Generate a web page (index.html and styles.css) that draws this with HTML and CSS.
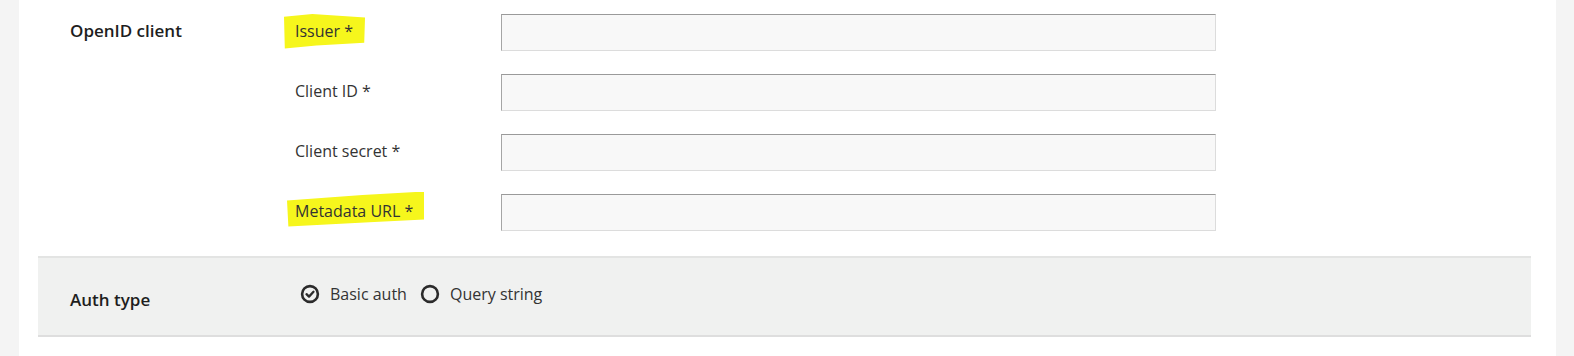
FILE: index.html
```html
<!DOCTYPE html>
<html lang="en">
<head>
    <meta charset="UTF-8">
    <title>OpenID client settings</title>
    <link rel="stylesheet" href="styles.css">
</head>
<body>
    <div class="panel">
        <div class="section">
            <div class="group-label">OpenID client</div>
            <div class="fields">
                <div class="field">
                    <label class="field-label"><span class="mark mark-issuer">Issuer *</span></label>
                    <input type="text" class="text-input">
                </div>
                <div class="field">
                    <label class="field-label">Client ID *</label>
                    <input type="text" class="text-input">
                </div>
                <div class="field">
                    <label class="field-label">Client secret *</label>
                    <input type="text" class="text-input">
                </div>
                <div class="field">
                    <label class="field-label"><span class="mark mark-metadata">Metadata URL *</span></label>
                    <input type="text" class="text-input">
                </div>
            </div>
        </div>

        <div class="band">
            <div class="group-label">Auth type</div>
            <div class="radios">
                <label class="radio">
                    <svg class="radio-icon" viewBox="0 0 20 20" width="20" height="20">
                        <circle cx="10" cy="10" r="7.9" fill="none" stroke="#2b2b2b" stroke-width="2.6"/>
                        <path d="M6.5 10.2 L9 12.6 L13.5 7.8" fill="none" stroke="#2b2b2b" stroke-width="2.3" stroke-linecap="round" stroke-linejoin="round"/>
                    </svg>
                    Basic auth
                </label>
                <label class="radio">
                    <svg class="radio-icon" viewBox="0 0 20 20" width="20" height="20">
                        <circle cx="10" cy="10" r="7.9" fill="none" stroke="#2b2b2b" stroke-width="2.6"/>
                    </svg>
                    Query string
                </label>
            </div>
        </div>
    </div>
</body>
</html>
```

FILE: styles.css
```css
* {
    margin: 0;
    padding: 0;
    box-sizing: border-box;
}

body {
    font-family: 'Open Sans', 'Liberation Sans', sans-serif;
    background-color: #f4f4f4;
    color: #333;
    height: 356px;
    overflow: hidden;
}

.panel {
    background-color: #fff;
    margin: 0 18px 0 19px;
    padding: 14px 25px 0 19px;
    height: 356px;
}

.section {
    display: flex;
    align-items: flex-start;
}

.group-label {
    width: 257px;
    padding-left: 32px;
    font-size: 17px;
    font-weight: 600;
    color: #1e1e1e;
    line-height: 33px;
    flex-shrink: 0;
}

.fields {
    display: flex;
    flex-direction: column;
    gap: 23px;
}

.field {
    display: flex;
    align-items: center;
    height: 37px;
}

.field-label {
    width: 206px;
    font-size: 16px;
    color: #333;
    margin-top: -4px;
}

.text-input {
    width: 715px;
    height: 37px;
    background-color: #f8f8f8;
    border: 1px solid #dcdcdc;
    border-top-color: #9a9a9a;
    border-left-color: #a5a5a5;
    outline: none;
}

.mark {
    position: relative;
    z-index: 0;
}

.mark::before {
    content: '';
    position: absolute;
    z-index: -1;
    background-color: #f6f61c;
}

.mark-issuer::before {
    left: -11px;
    right: -12px;
    top: -7px;
    bottom: -7px;
    clip-path: polygon(0 12%, 35% 4%, 100% 14%, 99% 84%, 40% 92%, 1% 100%);
}

.mark-metadata::before {
    left: -8px;
    right: -11px;
    top: -8px;
    bottom: -5px;
    clip-path: polygon(0 26%, 55% 10%, 100% 0, 100% 80%, 60% 88%, 1% 100%);
}

.band {
    display: flex;
    align-items: center;
    margin-top: 25px;
    height: 81px;
    background-color: #f0f1f0;
    border-top: 2px solid #e3e4e3;
    border-bottom: 2px solid #dedede;
}

.band .group-label {
    padding-top: 6px;
}

.radios {
    display: flex;
    gap: 13px;
    padding-left: 5px;
    margin-top: -6px;
}

.radio {
    display: flex;
    align-items: center;
    gap: 10px;
    font-size: 16px;
    color: #333;
}

.radio-icon {
    display: block;
}
```
